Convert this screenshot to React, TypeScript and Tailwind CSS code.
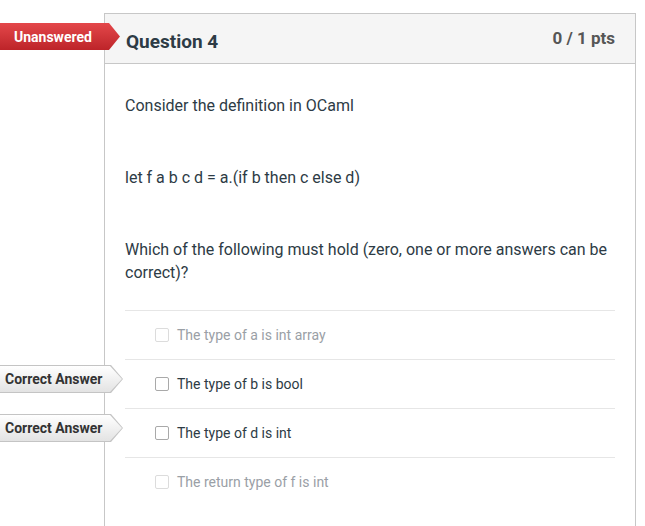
import React from 'react';

const answers = [
  { text: 'The type of a is int array', disabled: true, correct: false },
  { text: 'The type of b is bool', disabled: false, correct: true },
  { text: 'The type of d is int', disabled: false, correct: true },
  { text: 'The return type of f is int', disabled: true, correct: false },
];

const CorrectBadge: React.FC = () => (
  <div className="absolute -left-[125px] top-[5px] w-[123px] h-[28px] bg-[#c4c4c4] [clip-path:polygon(0_0,calc(100%-12px)_0,100%_50%,calc(100%-12px)_100%,0_100%)]">
    <div className="absolute left-0 top-px bottom-px right-px bg-gradient-to-b from-[#ffffff] to-[#e3e3e3] [clip-path:polygon(0_0,calc(100%-12px)_0,100%_50%,calc(100%-12px)_100%,0_100%)] flex items-center pl-[5px]">
      <span className="text-[14px] font-bold text-[#333] leading-none">Correct Answer</span>
    </div>
  </div>
);

export default function App() {
  return (
    <div className="w-[645px] h-[526px] bg-white overflow-hidden pt-[13px] pl-[104px] font-['Roboto','Liberation_Sans',sans-serif]">
      <div className="relative w-[532px] border border-[#c7c7c7] min-h-[560px]">
        {/* Unanswered badge */}
        <div className="absolute -left-[105px] top-[9px] w-[120px] h-[27px] bg-gradient-to-b from-[#e4474a] to-[#bd2329] [clip-path:polygon(0_0,calc(100%-11px)_0,100%_50%,calc(100%-11px)_100%,0_100%)] flex items-center pl-[14px]">
          <span className="text-[14px] font-bold text-white leading-none">Unanswered</span>
        </div>

        {/* Header */}
        <div className="h-[50px] bg-[#f5f5f5] border-b border-[#c7c7c7] flex justify-between items-start pl-[21px] pr-[20px]">
          <h2 className="text-[19px] font-bold text-[#2d3b45] mt-[18px] leading-none">Question 4</h2>
          <div className="text-[17px] font-bold text-[#565656] mt-[16px] leading-none">0 / 1 pts</div>
        </div>

        {/* Body */}
        <div className="px-[20px] pt-[30px] text-[16px] leading-[23px] text-[#2d3b45]">
          <p>Consider the definition in OCaml</p>
          <p className="mt-[49px]">let f a b c d = a.(if b then c else d)</p>
          <p className="mt-[49px]">Which of the following must hold (zero, one or more answers can be correct)?</p>

          <div className="mt-[26px]">
            {answers.map((a, i) => (
              <div key={i} className="relative border-t border-[#e6e6e6] h-[49px] flex items-center pl-[30px]">
                {a.correct && <CorrectBadge />}
                <span
                  className={`w-[14px] h-[14px] rounded-[2px] border ${a.disabled ? 'border-[#dcdcdc]' : 'border-[#a9a9a9]'} bg-white shrink-0`}
                />
                <span className={`ml-[8px] text-[14px] ${a.disabled ? 'text-[#9aa0a6]' : 'text-[#2d3b45]'}`}>{a.text}</span>
              </div>
            ))}
          </div>
        </div>
      </div>
    </div>
  );
}
